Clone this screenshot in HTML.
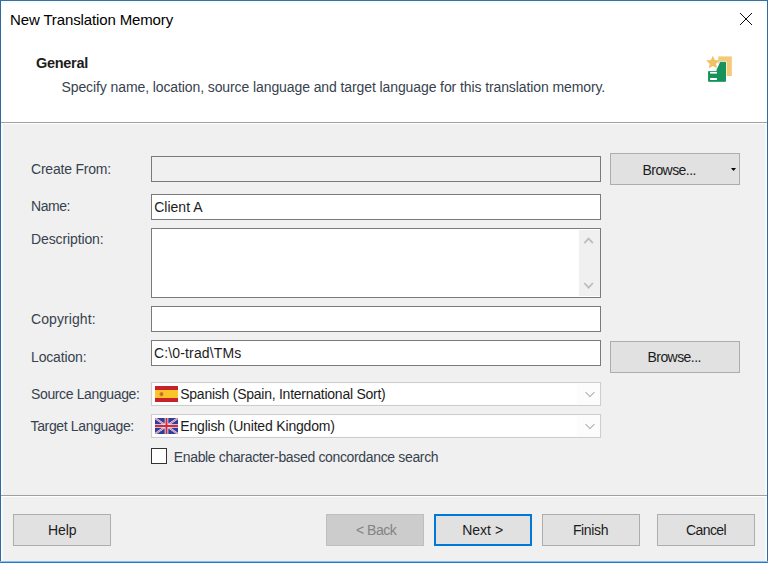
<!DOCTYPE html>
<html><head><meta charset="utf-8"><title>New Translation Memory</title>
<style>
html,body{margin:0;padding:0}
body{width:768px;height:563px;overflow:hidden;position:relative;background:#f0f0f0;font-family:"Liberation Sans",sans-serif;color:#1f2933}
.abs{position:absolute}
.t{position:absolute;white-space:nowrap;line-height:20px;height:20px;font-size:14px}
.inp{position:absolute;box-sizing:border-box;border:1px solid #7a7a7a;background:#fff}
.btn{position:absolute;box-sizing:border-box;border:1px solid #adadad;background:#e1e1e1}
.cmb{position:absolute;box-sizing:border-box;border:1px solid #cdcdcd;background:#fcfcfc}
</style></head><body>
<!-- header -->
<div class="abs" style="left:0;top:0;width:768px;height:122px;background:#fff"></div>
<div class="abs" style="left:1px;top:124px;width:2px;height:437px;background:#f6fafc"></div>
<div class="abs" style="left:765px;top:124px;width:2px;height:437px;background:#f6fafc"></div>
<div class="abs" style="left:0;top:122px;width:768px;height:1px;background:#a0a0a0"></div>
<div class="abs" style="left:0;top:123px;width:768px;height:1px;background:#fff"></div>
<div class="abs" style="left:0;top:495px;width:768px;height:1px;background:#a0a0a0"></div>
<div class="abs" style="left:0;top:496px;width:768px;height:1px;background:#fff"></div>

<span class="t" id="title" style="left:10.0px;top:9.6px;font-size:15px;letter-spacing:-0.129px;color:#000">New Translation Memory</span>
<svg class="abs" style="left:739px;top:12px" width="14" height="14" viewBox="0 0 14 14"><path d="M1 1 L13 13 M13 1 L1 13" stroke="#000" stroke-width="0.95" fill="none"/></svg>

<span class="t" id="general" style="left:36.0px;top:52.5px;font-size:14.5px;letter-spacing:-0.292px;color:#1c1c1c;font-weight:bold">General</span>
<span class="t" id="specify" style="left:61.5px;top:76.5px;font-size:14px;letter-spacing:-0.098px;color:#37424e">Specify name, location, source language and target language for this translation memory.</span>

<!-- icon -->
<svg class="abs" id="icon" style="left:704px;top:54px" width="32" height="30" viewBox="0 0 32 30">
<rect x="14.2" y="2.4" width="13.6" height="19.6" fill="#f3ca78"/>
<path d="M8.85 1.70 L10.78 6.04 L15.51 6.54 L11.98 9.72 L12.96 14.36 L8.85 11.99 L4.74 14.36 L5.72 9.72 L2.19 6.54 L6.92 6.04 Z" fill="#f0c063"/>
<path d="M4.6 17.6 H13 V15.8 L16 9.6 V8.3 H21.5 V27.3 H4.6 Z" fill="#16935a" stroke="#fff" stroke-width="2.2" stroke-linejoin="round"/>
<path d="M4.6 17.6 H13 V15.8 L16 9.6 V8.3 H21.5 V27.3 H4.6 Z" fill="#16935a" stroke="#16935a" stroke-width="1" stroke-linejoin="round"/>
<rect x="6.1" y="17.9" width="6.8" height="1.7" fill="#fff"/><rect x="6.1" y="24" width="6.8" height="2" fill="#fff"/>
</svg>

<!-- labels -->
<span class="t" id="l1" style="left:31.0px;top:158.75px;font-size:14px;letter-spacing:-0.205px;color:#37424e">Create From:</span>
<span class="t" id="l2" style="left:31.0px;top:196.25px;font-size:14px;letter-spacing:-0.438px;color:#37424e">Name:</span>
<span class="t" id="l3" style="left:31.0px;top:229.25px;font-size:14px;letter-spacing:-0.114px;color:#37424e">Description:</span>
<span class="t" id="l4" style="left:31.0px;top:309.25px;font-size:14px;letter-spacing:0.083px;color:#37424e">Copyright:</span>
<span class="t" id="l5" style="left:31.0px;top:346.75px;font-size:14px;letter-spacing:-0.156px;color:#37424e">Location:</span>
<span class="t" id="l6" style="left:31.0px;top:383.75px;font-size:14px;letter-spacing:-0.367px;color:#37424e">Source Language:</span>
<span class="t" id="l7" style="left:30.5px;top:416.25px;font-size:14px;letter-spacing:-0.35px;color:#37424e">Target Language:</span>

<!-- inputs -->
<div class="inp" style="left:151px;top:156px;width:450px;height:26px;background:#f0f0f0"></div>
<div class="inp" style="left:151px;top:194px;width:450px;height:26px"></div>
<span class="t" id="v1" style="left:154.2px;top:196.6px;font-size:14px;letter-spacing:0.007px;color:#1c1c1c">Client A</span>
<div class="inp" style="left:151px;top:228px;width:450px;height:70px"></div>
<div class="abs" style="left:579px;top:230px;width:21px;height:66px;background:#f0f0f0"></div>
<svg class="abs" style="left:579px;top:230px" width="21" height="66" viewBox="0 0 21 66"><path d="M5.3 13.2 L9.6 8.6 L13.9 13.2 M5.3 53 L9.6 57.6 L13.9 53" stroke="#bdbdbd" stroke-width="1.8" fill="none"/></svg>
<div class="inp" style="left:151px;top:306px;width:450px;height:26px"></div>
<div class="inp" style="left:151px;top:340px;width:450px;height:26px"></div>
<span class="t" id="v2" style="left:154.0px;top:343px;font-size:14px;letter-spacing:0.146px;color:#1c1c1c">C:\0-trad\TMs</span>

<!-- combos -->
<div class="cmb" style="left:151px;top:382px;width:450px;height:24px"></div>
<div class="abs" style="left:153px;top:384px;width:424px;height:20px;background:#fff"></div>
<div class="cmb" style="left:151px;top:414px;width:450px;height:24px"></div>
<div class="abs" style="left:153px;top:416px;width:424px;height:20px;background:#fff"></div>
<svg class="abs" style="left:584px;top:390px" width="12" height="9" viewBox="0 0 12 9"><path d="M1.5 2 L6 6.6 L10.5 2" stroke="#a8a8a8" stroke-width="1.05" fill="none"/></svg>
<svg class="abs" style="left:584px;top:422px" width="12" height="9" viewBox="0 0 12 9"><path d="M1.5 2 L6 6.6 L10.5 2" stroke="#a8a8a8" stroke-width="1.05" fill="none"/></svg>
<!-- flags -->
<svg class="abs" id="fes" style="left:154.7px;top:385.75px" width="23" height="16" viewBox="0 0 23 16"><rect width="23" height="16" fill="#c9212c"/><rect y="4" width="23" height="8" fill="#f8c62a"/><ellipse cx="6.5" cy="8.2" rx="2" ry="2.4" fill="#d4882c"/><rect x="5.7" y="7.2" width="1.6" height="2" fill="#c0502a"/></svg>
<svg class="abs" id="fuk" style="left:154.7px;top:417.75px" width="23" height="16" viewBox="0 0 23 16"><rect width="23" height="16" fill="#2d3d9d"/><path d="M0 0 L23 16 M23 0 L0 16" stroke="#e9e4f2" stroke-width="1.9"/><path d="M0 0 L23 16 M23 0 L0 16" stroke="#d94552" stroke-width="0.7"/><path d="M11.5 0 V16 M0 8 H23" stroke="#f2eef6" stroke-width="3.6"/><path d="M11.5 0 V16 M0 8 H23" stroke="#d62a3a" stroke-width="2"/></svg>
<span class="t" id="v3" style="left:180.25px;top:383.75px;font-size:14px;letter-spacing:-0.25px;color:#1c1c1c">Spanish (Spain, International Sort)</span>
<span class="t" id="v4" style="left:180.25px;top:415.5px;font-size:14px;letter-spacing:-0.174px;color:#1c1c1c">English (United Kingdom)</span>

<!-- checkbox -->
<div class="abs" style="left:151px;top:448px;width:16px;height:16px;box-sizing:border-box;border:1px solid #333;background:#fff"></div>
<span class="t" id="v5" style="left:173.75px;top:447px;font-size:14px;letter-spacing:-0.344px;color:#37424e">Enable character-based concordance search</span>

<!-- buttons -->
<div class="btn" style="left:610px;top:153px;width:130px;height:32px"></div>
<span class="t" id="b1" style="left:642.5px;top:159.5px;font-size:14px;letter-spacing:-0.562px;color:#1c1c1c">Browse...</span>
<svg class="abs" style="left:731px;top:168px" width="5" height="3" viewBox="0 0 5 3"><path d="M0 0 H5 L2.5 3 Z" fill="#000"/></svg>
<div class="btn" style="left:610px;top:341px;width:130px;height:32px"></div>
<span class="t" id="b2" style="left:647.5px;top:346.75px;font-size:14px;letter-spacing:-0.562px;color:#1c1c1c">Browse...</span>

<div class="btn" style="left:13px;top:514px;width:98px;height:32px"></div>
<span class="t" id="b3" style="left:48.0px;top:520px;font-size:14px;letter-spacing:-0.083px;color:#1c1c1c">Help</span>
<div class="btn" style="left:326px;top:514px;width:98px;height:32px;background:#cccccc;border-color:#bfbfbf"></div>
<span class="t" id="b4" style="left:355.9px;top:520px;font-size:14px;letter-spacing:-0.47px;color:#838383">&lt; Back</span>
<div class="btn" style="left:434px;top:514px;width:98px;height:32px;border:2px solid #0078d7"></div>
<span class="t" id="b5" style="left:462.2px;top:520px;font-size:14px;letter-spacing:0.01px;color:#1c1c1c">Next &gt;</span>
<div class="btn" style="left:542px;top:514px;width:98px;height:32px"></div>
<span class="t" id="b6" style="left:572.9px;top:520px;font-size:14px;letter-spacing:-0.35px;color:#1c1c1c">Finish</span>
<div class="btn" style="left:657px;top:514px;width:98px;height:32px"></div>
<span class="t" id="b7" style="left:686.0px;top:520px;font-size:14px;letter-spacing:-0.59px;color:#1c1c1c">Cancel</span>

<!-- window border -->
<div class="abs" style="left:0;top:0;width:768px;height:1px;background:#3b6f9d"></div>
<div class="abs" style="left:0;top:1px;width:768px;height:2px;background:#f3fdff"></div>
<div class="abs" style="left:0;top:0;width:1px;height:563px;background:#2f6b9f"></div>
<div class="abs" style="left:767px;top:0;width:1px;height:563px;background:#2f6ca3"></div>
<div class="abs" style="left:0;top:561px;width:768px;height:1px;background:#8fbde3"></div>
<div class="abs" style="left:0;top:562px;width:768px;height:1px;background:#1f7dcb"></div>
</body></html>
